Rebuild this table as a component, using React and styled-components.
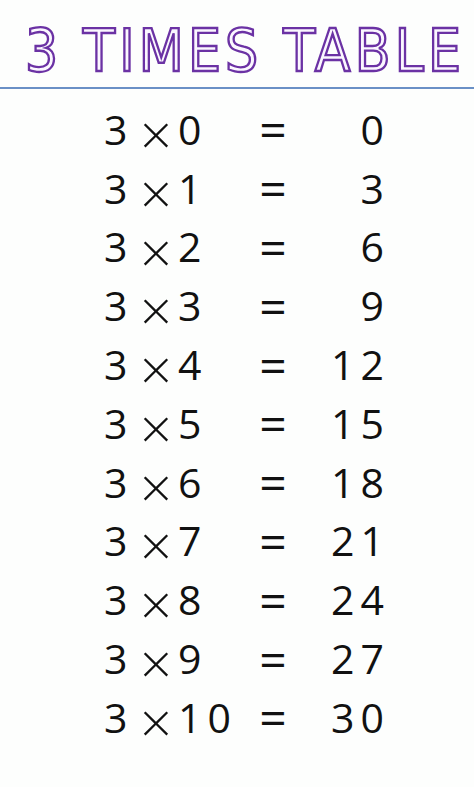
import React from 'react';
import styled, { createGlobalStyle } from 'styled-components';

const GlobalStyle = createGlobalStyle`
  html, body {
    margin: 0;
    padding: 0;
    background: #fdfefd;
  }
`;

const Page = styled.div`
  width: 474px;
  height: 787px;
  overflow: hidden;
  background: #fdfefd;
  font-family: "Open Sans", "DejaVu Sans", sans-serif;
`;

const Header = styled.header`
  height: 89px;
  box-sizing: border-box;
  padding-top: 14px;
  display: flex;
  align-items: center;
  justify-content: center;
  border-bottom: 2px solid #6a90c6;
`;

const Title = styled.h1`
  margin: 0;
  padding-left: 16px;
  font-family: "DejaVu Sans Condensed", "DejaVu Sans", sans-serif;
  font-weight: 400;
  font-size: 58px;
  letter-spacing: 4.2px;
  color: #fbf7ff;
  -webkit-text-stroke: 2.3px #6b32a4;
  white-space: nowrap;
  line-height: 1;
`;

const Table = styled.div`
  display: grid;
  grid-template-columns: 34px 36px 86px 26px 98px;
  grid-auto-rows: 58.8px;
  padding: 11px 0 0 104px;
  color: #111;
  font-size: 41px;
`;

const Cell = styled.div`
  display: flex;
  align-items: center;
  justify-content: ${(p) => p.$align || 'flex-start'};
  white-space: nowrap;
  line-height: 1;
  letter-spacing: 6px;
`;

const Times = styled(Cell)`
  font-size: 56px;
  font-weight: 300;
  letter-spacing: 0;
  padding-top: 7px;
`;

const Multiplier = styled(Cell)`
  padding-left: 4px;
`;

const Equals = styled(Cell)`
  font-size: 48px;
  letter-spacing: 0;
`;

const Result = styled(Cell)`
  margin-right: -6px;
`;

const rows = Array.from({ length: 11 }, (_, i) => i);

export default function App() {
  return (
    <Page>
      <GlobalStyle />
      <Header>
        <Title>3 TIMES TABLE</Title>
      </Header>
      <Table>
        {rows.map((n) => (
          <React.Fragment key={n}>
            <Cell>3</Cell>
            <Times $align="center">×</Times>
            <Multiplier>{n}</Multiplier>
            <Equals $align="center">=</Equals>
            <Result $align="flex-end">{3 * n}</Result>
          </React.Fragment>
        ))}
      </Table>
    </Page>
  );
}
